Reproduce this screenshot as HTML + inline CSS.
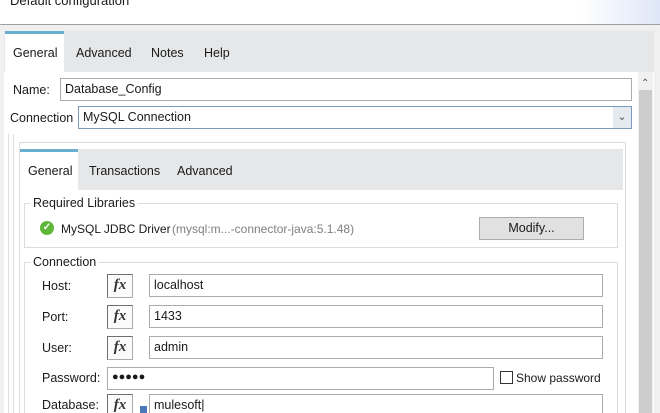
<!DOCTYPE html>
<html><head><meta charset="utf-8"><style>
*{box-sizing:border-box;margin:0;padding:0}
html,body{width:660px;height:413px;overflow:hidden}
body{background:#fff;font-family:"Liberation Sans",sans-serif;font-size:12.5px;color:#1a1a1a;position:relative}
.a{position:absolute}
.inp{position:absolute;background:#fff;border:1px solid #ababab;height:23px;padding:3px 4px;font-size:12.5px;white-space:nowrap}
.fx{position:absolute;width:26px;height:24px;border:1px solid #ababab;border-top-color:#707070;border-left-color:#707070;background:#fbfbfb;font-family:"Liberation Serif",serif;font-style:italic;font-weight:bold;font-size:15px;text-align:center;line-height:21px;color:#333}
.tab{position:absolute;font-size:12.5px}
.gb{position:absolute;border:1px solid #dcdcdc}
.leg{position:absolute;background:#fff;padding:0 3px;font-size:12.5px}
#wrap{position:absolute;left:0;top:0;width:660px;height:413px;overflow:hidden}
</style></head><body><div id="wrap">
<div class="a" style="left:10px;top:-7px;font-size:13px">Default configuration</div>
<div class="a" style="left:580px;top:0;width:80px;height:24px;background:linear-gradient(90deg,#fff,#dfe6f7)"></div>
<div class="a" style="left:0;top:24px;width:660px;height:1px;background:#a0a0a0"></div>
<div class="a" style="left:0;top:25px;width:660px;height:388px;background:#f0f0f0"></div>
<div class="a" style="left:4px;top:31px;width:650px;height:382px;background:#fff"></div>
<div class="a" style="left:4px;top:31px;width:650px;height:41px;background:#e6e7e8"></div>
<div class="a" style="left:5px;top:31px;width:59px;height:41px;background:#fff;border-top:3px solid #6aafcf"></div>
<div class="tab" style="left:13px;top:46px">General</div>
<div class="tab" style="left:76px;top:46px">Advanced</div>
<div class="tab" style="left:151px;top:46px">Notes</div>
<div class="tab" style="left:204px;top:46px">Help</div>
<div class="a" style="left:638px;top:72px;width:15px;height:341px;background:#f0f0f0;z-index:5"></div>
<div class="a" style="left:639px;top:90px;width:13px;height:323px;background:#cdcdcd;z-index:6"></div>
<div class="a" style="left:641px;top:78px;font-size:10px;color:#555;z-index:6">&#8963;</div>
<div class="a" style="left:13px;top:83px">Name:</div>
<div class="inp" style="left:60px;top:78px;width:572px">Database_Config</div>
<div class="a" style="left:10px;top:111px">Connection</div>
<div class="inp" style="left:78px;top:106px;width:554px;border-color:#7a9ab8">MySQL Connection</div>
<div class="a" style="left:613px;top:107px;width:18px;height:21px;background:#e5eaf0;color:#555;text-align:center;font-size:11px;line-height:20px">&#8964;</div>
<div class="a" style="left:8px;top:134px;width:1px;height:279px;background:#e0e0e0"></div>
<div class="a" style="left:13px;top:134px;width:1px;height:279px;background:#e0e0e0"></div>
<div class="gb" style="left:19px;top:142px;width:607px;height:280px"></div>
<div class="a" style="left:20px;top:149px;width:603px;height:41px;background:#e6e7e8"></div>
<div class="a" style="left:20px;top:149px;width:58px;height:41px;background:#fff;border-top:3px solid #6aafcf"></div>
<div class="tab" style="left:28px;top:164px">General</div>
<div class="tab" style="left:89px;top:164px">Transactions</div>
<div class="tab" style="left:177px;top:164px">Advanced</div>
<div class="gb" style="left:24px;top:203px;width:594px;height:45px"></div>
<div class="leg" style="left:30px;top:196px">Required Libraries</div>
<div class="a" style="left:40px;top:221px;width:14px;height:14px;border-radius:50%;background:#5fb73a;color:#fff;font-size:10px;text-align:center;line-height:14px;font-weight:bold">&#10003;</div>
<div class="a" style="left:61px;top:222px;font-size:12px">MySQL JDBC Driver</div>
<div class="a" style="left:172px;top:222px;color:#808080;font-size:12px">(mysql:m...-connector-java:5.1.48)</div>
<div class="a" style="left:479px;top:217px;width:105px;height:23px;background:#e1e1e1;border:1px solid #adadad;text-align:center;line-height:21px">Modify...</div>
<div class="gb" style="left:24px;top:262px;width:594px;height:160px"></div>
<div class="leg" style="left:30px;top:255px">Connection</div>
<div class="a" style="left:42px;top:279px">Host:</div>
<div class="fx" style="left:107px;top:274px">fx</div>
<div class="inp" style="left:149px;top:274px;width:454px">localhost</div>
<div class="a" style="left:42px;top:310px">Port:</div>
<div class="fx" style="left:107px;top:305px">fx</div>
<div class="inp" style="left:149px;top:305px;width:454px">1433</div>
<div class="a" style="left:42px;top:341px">User:</div>
<div class="fx" style="left:107px;top:336px">fx</div>
<div class="inp" style="left:149px;top:336px;width:454px">admin</div>
<div class="a" style="left:42px;top:371px">Password:</div>
<div class="inp" style="left:107px;top:367px;width:387px;font-size:11px">&#9679;&#9679;&#9679;&#9679;&#9679;</div>
<div class="a" style="left:500px;top:371px;width:13px;height:13px;border:1px solid #333;background:#fff"></div>
<div class="a" style="left:516px;top:371px;font-size:12px">Show password</div>
<div class="a" style="left:42px;top:398px">Database:</div>
<div class="fx" style="left:107px;top:394px">fx</div>
<div class="a" style="left:140px;top:406px;width:7px;height:7px;background:#4a78b8"></div>
<div class="inp" style="left:149px;top:394px;width:454px">mulesoft|</div>
</div></body></html>
